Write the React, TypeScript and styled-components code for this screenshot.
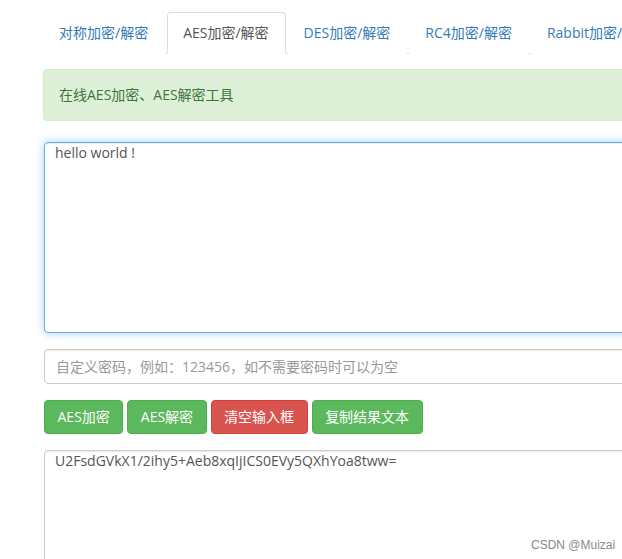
import React from "react";
import styled, { createGlobalStyle } from "styled-components";

const Global = createGlobalStyle`
  html, body { margin: 0; padding: 0; background: #fff; overflow: hidden; }
  body {
    font-family: "Open Sans", "Noto Sans CJK SC", sans-serif;
    font-size: 14px;
    line-height: 1.42857;
    color: #333;
  }
  * { box-sizing: border-box; }
`;

const Page = styled.div`
  width: 820px;
  padding: 12px 0 0 43px;
  position: relative;
  height: 559px;
`;

const Tabs = styled.ul`
  list-style: none;
  margin: 0;
  padding: 0;
  display: flex;
  border-bottom: 1px solid #ddd;
`;

const Tab = styled.li<{ $active?: boolean }>`
  margin: 0 2px -1px 0;
  padding: 10px 16px 10px 15px;
  line-height: 20px;
  white-space: nowrap;
  border: 1px solid ${(p) => (p.$active ? "#ddd" : "transparent")};
  border-bottom-color: ${(p) => (p.$active ? "#fff" : "transparent")};
  border-radius: 4px 4px 0 0;
  background: #fff;
  color: ${(p) => (p.$active ? "#555" : "#337ab7")};
`;

const Alert = styled.div`
  margin: 15px 0 21px;
  padding: 15px;
  border: 1px solid #d6e9c6;
  border-radius: 4px;
  background: #dff0d8;
  color: #3c763d;
  line-height: 20px;
`;

const Form = styled.div`
  margin-left: 1px;
`;

const Area = styled.div<{ $focus?: boolean; $h: number }>`
  height: ${(p) => p.$h}px;
  padding: 0 10px;
  border: 1px solid ${(p) => (p.$focus ? "#66afe9" : "#ccc")};
  border-radius: 4px;
  background: #fff;
  color: #555;
  line-height: 20px;
  box-shadow: ${(p) =>
    p.$focus
      ? "inset 0 1px 1px rgba(0,0,0,.075), 0 0 8px rgba(102,175,233,.6)"
      : "inset 0 1px 1px rgba(0,0,0,.075)"};
`;

const Input = styled.div`
  margin-top: 16px;
  height: 35px;
  padding: 7px 11px;
  border: 1px solid #ccc;
  border-radius: 4px;
  color: #999;
  line-height: 20px;
  box-shadow: inset 0 1px 1px rgba(0,0,0,.075);
`;

const BtnRow = styled.div`
  margin: 16px 0 16px;
  display: flex;
  gap: 4px;
`;

const Btn = styled.button<{ $danger?: boolean }>`
  font: inherit;
  height: 34px;
  padding: 6px 12.5px;
  line-height: 20px;
  border-radius: 4px;
  color: #fff;
  cursor: pointer;
  background: ${(p) => (p.$danger ? "#d9534f" : "#5cb85c")};
  border: 1px solid ${(p) => (p.$danger ? "#d43f3a" : "#4cae4c")};
`;

const Watermark = styled.div`
  position: absolute;
  left: 531px;
  top: 537px;
  font-family: "Liberation Sans", Arial, sans-serif;
  font-size: 12px;
  color: #8a8a8a;
  white-space: nowrap;
`;

export default function App() {
  return (
    <>
      <Global />
      <Page>
        <Tabs>
          <Tab>对称加密/解密</Tab>
          <Tab $active>AES加密/解密</Tab>
          <Tab>DES加密/解密</Tab>
          <Tab>RC4加密/解密</Tab>
          <Tab>Rabbit加密/解密</Tab>
        </Tabs>
        <Alert>在线AES加密、AES解密工具</Alert>
        <Form>
          <Area $focus $h={191}>hello world !</Area>
          <Input>自定义密码，例如：123456，如不需要密码时可以为空</Input>
          <BtnRow>
            <Btn>AES加密</Btn>
            <Btn>AES解密</Btn>
            <Btn $danger>清空输入框</Btn>
            <Btn>复制结果文本</Btn>
          </BtnRow>
          <Area $h={200}>U2FsdGVkX1/2ihy5+Aeb8xqIjICS0EVy5QXhYoa8tww=</Area>
        </Form>
      </Page>
      <Watermark>CSDN @Muizai</Watermark>
    </>
  );
}
